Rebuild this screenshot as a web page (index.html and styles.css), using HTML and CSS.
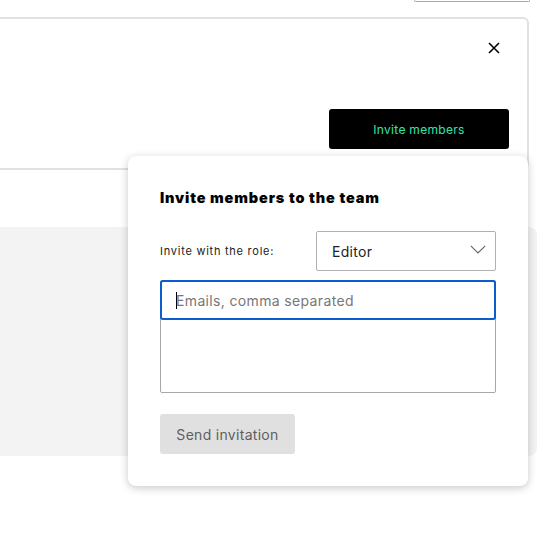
FILE: index.html
```html
<!DOCTYPE html>
<html>
<head>
<meta charset="utf-8">
<link rel="stylesheet" href="styles.css">
</head>
<body>
<div class="page">
  <div class="topbar"><div class="topbox"></div></div>
  <div class="card">
    <div class="card-close">
      <svg width="12" height="12" viewBox="0 0 12 12"><path d="M1 1 L11 11 M11 1 L1 11" stroke="#000" stroke-width="1.6" fill="none"/></svg>
    </div>
    <div class="card-actions">
      <button class="btn-invite">Invite members</button>
    </div>
  </div>
  <div class="grey-area"></div>

  <div class="popup">
    <h2 class="popup-title">Invite members to the team</h2>
    <div class="role-row">
      <span class="role-label">Invite with the role:</span>
      <div class="select">
        <span>Editor</span>
        <svg width="16" height="9" viewBox="0 0 16 9"><path d="M0.8 0.8 L8 8 L15.2 0.8" stroke="#666" stroke-width="1.1" fill="none"/></svg>
      </div>
    </div>
    <div class="emails">
      <div class="emails-input"><span class="caret"></span><span class="placeholder">Emails, comma separated</span></div>
    </div>
    <button class="btn-send">Send invitation</button>
  </div>
</div>
</body>
</html>
```
FILE: styles.css
```css
html, body {
  margin: 0;
  padding: 0;
  background: #fff;
  font-family: Inter, "Open Sans", sans-serif;
}
.page {
  position: relative;
  width: 557px;
  height: 543px;
  overflow: hidden;
}
.topbar {
  height: 17px;
  display: flex;
  justify-content: flex-end;
}
.topbox {
  width: 114px;
  height: 1px;
  margin-right: 27px;
  border: 1px solid #a8a8a8;
  border-top: none;
  border-radius: 0 0 3px 3px;
}
.card {
  box-sizing: border-box;
  width: 539px;
  margin-left: -10px;
  height: 153px;
  border: 2px solid #e1e1e1;
  border-radius: 6px;
  padding: 23px 18px 0 0;
}
.card-close {
  display: flex;
  justify-content: flex-end;
  margin-right: 9px;
  height: 12px;
}
.card-close svg { display: block; }
.card-actions {
  display: flex;
  justify-content: flex-end;
  margin-top: 55px;
}
.btn-invite {
  width: 180px;
  height: 40px;
  background: #000;
  color: #31e6ab;
  border: none;
  border-radius: 3px;
  font-family: Inter, sans-serif;
  font-size: 12px;
  letter-spacing: 0.3px;
  padding: 0;
}
.grey-area {
  margin-top: 57px;
  width: 537px;
  height: 229px;
  background: #f3f3f3;
  border-radius: 0 8px 8px 0;
}
.popup {
  position: absolute;
  left: 128px;
  top: 156px;
  box-sizing: border-box;
  width: 400px;
  height: 330px;
  background: #fff;
  border-radius: 8px;
  box-shadow: 0 2px 8px rgba(0,0,0,0.22);
  padding: 32px;
  display: flex;
  flex-direction: column;
}
.popup-title {
  margin: 0;
  font-size: 14.5px;
  line-height: 20px;
  font-weight: 900;
  letter-spacing: 0.85px;
  color: #000;
}
.role-row {
  display: flex;
  align-items: center;
  justify-content: space-between;
  margin-top: 23px;
}
.role-label {
  font-size: 11px;
  color: #222;
  letter-spacing: 0.75px;
}
.select {
  box-sizing: border-box;
  width: 180px;
  height: 40px;
  border: 1px solid #b0b0b0;
  border-radius: 2px;
  display: flex;
  align-items: center;
  justify-content: space-between;
  padding: 0 9px 0 15px;
  font-size: 14px;
  letter-spacing: 0.3px;
  color: #222;
}
.select svg { display: block; margin-top: -3px; }
.emails {
  box-sizing: border-box;
  margin-top: 9px;
  height: 113px;
  border: 1px solid #a8a8a8;
  border-radius: 2px;
}
.emails-input {
  box-sizing: border-box;
  height: 40px;
  margin: -1px -1px 0 -1px;
  border: 2px solid #0b5ccf;
  border-radius: 3px;
  display: flex;
  align-items: center;
  padding-left: 14px;
  font-size: 14px;
  color: #777;
  letter-spacing: 0.35px;
}
.caret {
  display: inline-block;
  width: 1px;
  height: 17px;
  background: #000;
  margin-right: -1px;
}
.btn-send {
  align-self: flex-start;
  margin-top: 21px;
  width: 135px;
  height: 40px;
  border: none;
  border-radius: 3px;
  background: #e0e0e0;
  color: #5f5f5f;
  font-family: Inter, sans-serif;
  font-size: 14px;
  letter-spacing: 0.3px;
  padding: 0;
}
```
